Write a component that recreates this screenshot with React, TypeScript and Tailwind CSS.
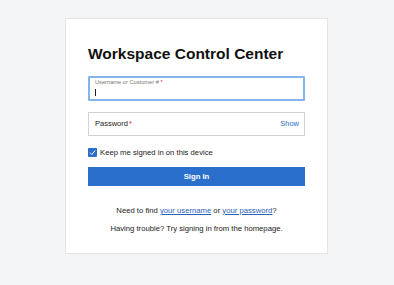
import React from "react";

export default function App() {
  return (
    <div className="min-h-[285px] w-full bg-[#f4f5f6] pt-[18px] pl-[65px]" style={{ fontFamily: '"Liberation Sans", Arial, sans-serif' }}>
      <div className="w-[263px] h-[236px] bg-white border border-[#e2e4e6] px-[22px] pt-[26px]">
        <h1 className="text-[15.5px] leading-[18px] font-bold text-[#111]">Workspace Control Center</h1>
        <div className="mt-[13px] h-[25px] border-2 border-[#86b4ee] rounded-[1px] pl-[5px] flex flex-col">
          <div className="text-[5.7px] leading-[7px] text-[#777] mt-[1px]">
            Username or Customer # <span className="text-[#e03030]">*</span>
          </div>
          <div className="w-px h-[7px] bg-[#222] mt-[3px]" />
        </div>
        <div className="mt-[11px] h-[24px] border border-[#cfd3d7] flex items-center justify-between pl-[6px] pr-[5px]">
          <span className="text-[7.5px] text-[#1a1a1a]">
            Password<span className="text-[#e03030] ml-[1px]">*</span>
          </span>
          <span className="text-[7.5px] text-[#2d6bc4]">Show</span>
        </div>
        <div className="mt-[10px] flex items-center gap-[3px]">
          <div className="w-[9px] h-[9px] bg-[#2b6fcc] rounded-[1px] flex items-center justify-center">
            <svg width="7" height="7" viewBox="0 0 10 10">
              <path d="M1.5 5.3 L4 7.8 L8.8 2.2" fill="none" stroke="white" strokeWidth="1.4" />
            </svg>
          </div>
          <span className="text-[7.7px] leading-[10px] text-[#1a1a1a] mt-[2px]">Keep me signed in on this device</span>
        </div>
        <button className="mt-[9px] w-full h-[19px] bg-[#2b6fcc] text-white text-[7.7px] font-bold flex items-center justify-center">
          Sign In
        </button>
        <div className="mt-[20px] text-center text-[7.7px] leading-[10px] text-[#1a1a1a]">
          Need to find <span className="text-[#2a63b8] underline">your username</span> or{" "}
          <span className="text-[#2a63b8] underline">your password</span>?
        </div>
        <div className="mt-[8px] text-center text-[7.7px] leading-[10px] text-[#1a1a1a]">
          Having trouble? Try signing in from the homepage.
        </div>
      </div>
    </div>
  );
}
